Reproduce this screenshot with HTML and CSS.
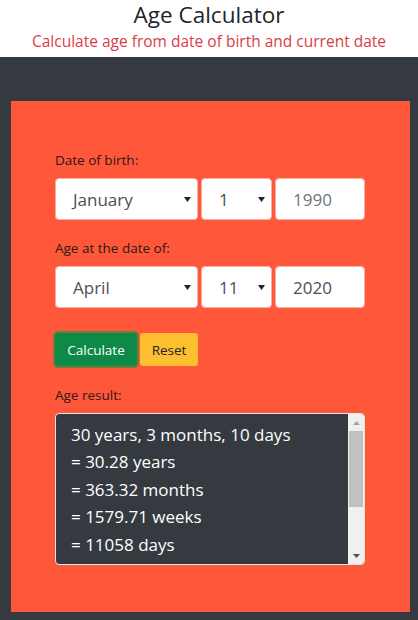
FILE: index.html
```html
<!DOCTYPE html>
<html lang="en">
<head>
<meta charset="utf-8">
<title>Age Calculator</title>
<link rel="stylesheet" href="styles.css">
</head>
<body>
<header class="header">
  <h1 class="title">Age Calculator</h1>
  <p class="subtitle">Calculate age from date of birth and current date</p>
</header>
<main class="stage">
  <section class="card">
    <div class="group">
      <div class="label">Date of birth:</div>
      <div class="date-row">
        <div class="field select"><span>January</span><svg class="caret" width="7" height="5" viewBox="0 0 7 5"><path d="M0 0H7L3.5 5Z" fill="#222"/></svg></div>
        <div class="field select"><span>1</span><svg class="caret" width="7" height="5" viewBox="0 0 7 5"><path d="M0 0H7L3.5 5Z" fill="#222"/></svg></div>
        <div class="field input placeholder">1990</div>
      </div>
    </div>
    <div class="group">
      <div class="label">Age at the date of:</div>
      <div class="date-row">
        <div class="field select"><span>April</span><svg class="caret" width="7" height="5" viewBox="0 0 7 5"><path d="M0 0H7L3.5 5Z" fill="#222"/></svg></div>
        <div class="field select"><span>11</span><svg class="caret" width="7" height="5" viewBox="0 0 7 5"><path d="M0 0H7L3.5 5Z" fill="#222"/></svg></div>
        <div class="field input">2020</div>
      </div>
    </div>
    <div class="buttons">
      <button class="btn btn-calc">Calculate</button>
      <button class="btn btn-reset">Reset</button>
    </div>
    <div class="label result-label">Age result:</div>
    <div class="result">
      <div class="result-text">30 years, 3 months, 10 days<br>= 30.28 years<br>= 363.32 months<br>= 1579.71 weeks<br>= 11058 days<br>= 265392 hours</div>
      <div class="scrollbar">
        <div class="sb-btn"><svg width="7" height="4" viewBox="0 0 7 4"><path d="M0 4H7L3.5 0Z" fill="#a3a3a3"/></svg></div>
        <div class="sb-track"><div class="sb-thumb"></div></div>
        <div class="sb-btn"><svg width="7" height="4" viewBox="0 0 7 4"><path d="M0 0H7L3.5 4Z" fill="#505050"/></svg></div>
      </div>
    </div>
  </section>
</main>
</body>
</html>
```
FILE: styles.css
```css
* { box-sizing: border-box; }
html, body { margin: 0; padding: 0; }
body {
  font-family: "Open Sans", "Noto Sans", sans-serif;
  color: #212529;
  background: #fff;
  width: 418px;
  overflow: hidden;
}
.header {
  height: 57px;
  padding-top: 3px;
  text-align: center;
}
.title {
  margin: 0;
  font-size: 22.5px;
  font-weight: 500;
  line-height: 24px;
  color: #212529;
}
.subtitle {
  margin: 3px 0 0;
  font-size: 15.5px;
  line-height: 22px;
  color: #d93d48;
}
.stage {
  background: #343a40;
  padding: 44px 8px 8px 11px;
}
.card {
  background: #ff573a;
  padding: 49px 45px 47px 44px;
}
.group { margin-bottom: 18px; }
.label {
  font-size: 13.5px;
  line-height: 20px;
  color: #2a1a16;
  margin-bottom: 8px;
}
.date-row {
  display: grid;
  grid-template-columns: 143px 71px 1fr;
  gap: 3px;
}
.field {
  height: 42px;
  background: #fff;
  border: 1px solid #f2b3a6;
  border-radius: 4px;
  font-size: 17px;
  color: #495057;
  display: flex;
  align-items: center;
  padding: 0 6px 0 17px;
}
.select { justify-content: space-between; }
.caret { flex: none; }
.placeholder { color: #6c757d; }
.buttons {
  display: flex;
  gap: 3px;
  margin-top: 25px;
  margin-bottom: 19px;
}
.btn {
  font-family: inherit;
  font-size: 13.5px;
  height: 33px;
  border: none;
  border-radius: 3px;
  padding: 0;
  cursor: pointer;
}
.btn-calc {
  width: 82px;
  background: #0d8a48;
  color: #fff;
  box-shadow: 0 0 0 2px #6e7a3a;
}
.btn-reset {
  width: 58px;
  background: #fdbe2f;
  color: #212529;
}
.result {
  height: 152px;
  display: flex;
  background: #343a40;
  border: 1px solid #e6e6e6;
  border-radius: 4px;
  overflow: hidden;
}
.result-text {
  flex: 1;
  padding: 7px 10px 0 15px;
  font-size: 17px;
  line-height: 27.4px;
  color: #fff;
  overflow: hidden;
}
.scrollbar {
  width: 16px;
  background: #f0f0f0;
  display: flex;
  flex-direction: column;
}
.sb-btn {
  height: 17px;
  display: flex;
  align-items: center;
  justify-content: center;
}
.sb-track {
  flex: 1;
  padding: 0 1px;
}
.sb-thumb {
  height: 76px;
  background: #c1c1c1;
}
```
